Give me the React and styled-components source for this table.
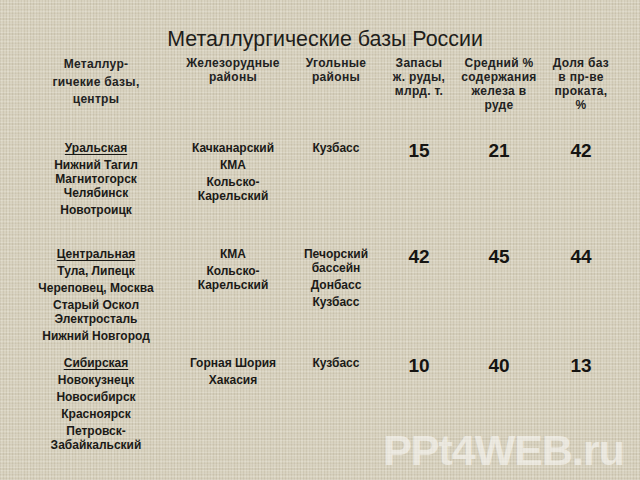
import { Fragment } from "react";
import styled, { createGlobalStyle } from "styled-components";

const GlobalStyles = createGlobalStyle`
  html, body {
    margin: 0;
    padding: 0;
  }
  body {
    font-family: "Liberation Sans", Arial, sans-serif;
    color: #1b1a17;
  }
`;

const Slide = styled.div`
  position: relative;
  width: 640px;
  height: 480px;
  overflow: hidden;
  box-sizing: border-box;
  padding-top: 27px;
  background-color: #d8d2bf;
  background-image:
    repeating-linear-gradient(0deg, rgba(255, 255, 255, 0.16) 0 1px, transparent 1px 3px),
    repeating-linear-gradient(90deg, rgba(110, 95, 65, 0.1) 0 1px, transparent 1px 3px),
    repeating-linear-gradient(0deg, rgba(120, 105, 75, 0.06) 0 2px, transparent 2px 5px),
    repeating-linear-gradient(90deg, rgba(255, 255, 255, 0.08) 0 2px, transparent 2px 7px);
`;

const Title = styled.h1`
  margin: 0 0 5px 0;
  padding-left: 10px;
  text-align: center;
  font-size: 21.4px;
  line-height: 24px;
  font-weight: 400;
  color: #1e1d1a;
`;

const Table = styled.div`
  display: grid;
  grid-template-columns: 152px 122px 84px 82px 78px 86px;
  grid-template-rows: 82px 106px 109px auto;
  margin-left: 20px;
`;

const HeadCell = styled.div`
  text-align: center;
  font-size: 12px;
  letter-spacing: 0.3px;
  font-weight: 700;
  line-height: ${(p) => p.$lh || 14}px;
  white-space: pre-line;
  color: #222;
`;

const Cell = styled.div`
  text-align: center;
  font-size: 12px;
  font-weight: 700;
  line-height: 14px;
`;

const Item = styled.p`
  margin: 3px 0 0 0;
  white-space: pre-line;
  text-decoration: ${(p) => (p.$base ? "underline" : "none")};
  text-underline-offset: 2px;
`;

const Num = styled.div`
  margin-top: 2px;
  text-align: center;
  font-size: 19px;
  line-height: 22px;
  font-weight: 700;
  color: #151412;
`;

const Watermark = styled.div`
  position: absolute;
  right: 16px;
  bottom: 5px;
  font-size: 43px;
  font-weight: 700;
  letter-spacing: -1px;
  color: rgba(255, 255, 255, 0.5);
`;

const heads = [
  { text: "Металлур-\nгичекие базы,\nцентры", lh: 17.5 },
  { text: "Железорудные\nрайоны" },
  { text: "Угольные\nрайоны" },
  { text: "Запасы\nж. руды,\nмлрд. т." },
  { text: "Средний %\nсодержания\nжелеза в\nруде" },
  { text: "Доля баз\nв пр-ве\nпроката,\n%" },
];

const rows = [
  {
    base: "Уральская",
    centers: ["Нижний Тагил\nМагнитогорск\nЧелябинск", "Новотроицк"],
    ore: ["Качканарский", "КМА", "Кольско-\nКарельский"],
    coal: ["Кузбасс"],
    nums: [15, 21, 42],
  },
  {
    base: "Центральная",
    centers: ["Тула, Липецк", "Череповец, Москва", "Старый Оскол\nЭлектросталь", "Нижний Новгород"],
    ore: ["КМА", "Кольско-\nКарельский"],
    coal: ["Печорский\nбассейн", "Донбасс", "Кузбасс"],
    nums: [42, 45, 44],
  },
  {
    base: "Сибирская",
    centers: ["Новокузнецк", "Новосибирск", "Красноярск", "Петровск-\nЗабайкальский"],
    ore: ["Горная Шория", "Хакасия"],
    coal: ["Кузбасс"],
    nums: [10, 40, 13],
  },
];

function List({ items }) {
  return items.map((t) => <Item key={t}>{t}</Item>);
}

export default function App() {
  return (
    <>
      <GlobalStyles />
      <Slide>
        <Title>Металлургические базы России</Title>
        <Table>
          {heads.map((h) => (
            <HeadCell key={h.text} $lh={h.lh}>
              {h.text}
            </HeadCell>
          ))}
          {rows.map((r) => (
            <Fragment key={r.base}>
              <Cell>
                <Item $base>{r.base}</Item>
                <List items={r.centers} />
              </Cell>
              <Cell>
                <List items={r.ore} />
              </Cell>
              <Cell>
                <List items={r.coal} />
              </Cell>
              {r.nums.map((n, i) => (
                <Num key={i}>{n}</Num>
              ))}
            </Fragment>
          ))}
        </Table>
        <Watermark>PPt4WEB.ru</Watermark>
      </Slide>
    </>
  );
}
